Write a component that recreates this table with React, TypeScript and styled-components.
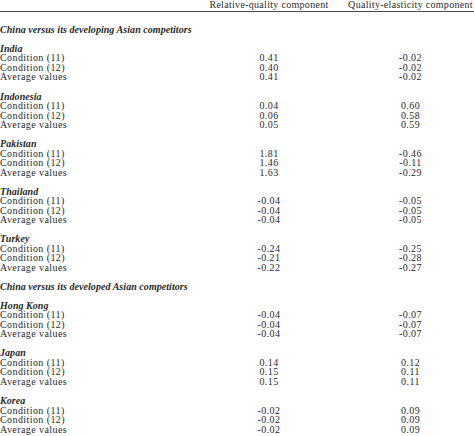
import React from 'react';
import styled, { createGlobalStyle } from 'styled-components';

type Country = {
  name: string;
  rows: [string, string, string][];
};

type Section = {
  title: string;
  countries: Country[];
};

const rowsFor = (values: [string, string][]): [string, string, string][] => [
  ['Condition (11)', values[0][0], values[0][1]],
  ['Condition (12)', values[1][0], values[1][1]],
  ['Average values', values[2][0], values[2][1]],
];

const sections: Section[] = [
  {
    title: 'China versus its developing Asian competitors',
    countries: [
      { name: 'India', rows: rowsFor([['0.41', '-0.02'], ['0.40', '-0.02'], ['0.41', '-0.02']]) },
      { name: 'Indonesia', rows: rowsFor([['0.04', '0.60'], ['0.06', '0.58'], ['0.05', '0.59']]) },
      { name: 'Pakistan', rows: rowsFor([['1.81', '-0.46'], ['1.46', '-0.11'], ['1.63', '-0.29']]) },
      { name: 'Thailand', rows: rowsFor([['-0.04', '-0.05'], ['-0.04', '-0.05'], ['-0.04', '-0.05']]) },
      { name: 'Turkey', rows: rowsFor([['-0.24', '-0.25'], ['-0.21', '-0.28'], ['-0.22', '-0.27']]) },
    ],
  },
  {
    title: 'China versus its developed Asian competitors',
    countries: [
      { name: 'Hong Kong', rows: rowsFor([['-0.04', '-0.07'], ['-0.04', '-0.07'], ['-0.04', '-0.07']]) },
      { name: 'Japan', rows: rowsFor([['0.14', '0.12'], ['0.15', '0.11'], ['0.15', '0.11']]) },
      { name: 'Korea', rows: rowsFor([['-0.02', '0.09'], ['-0.02', '0.09'], ['-0.02', '0.09']]) },
    ],
  },
];

const GlobalStyle = createGlobalStyle`
  html, body {
    margin: 0;
    padding: 0;
    background: #ffffff;
  }
  body {
    font-family: "Liberation Serif", "Times New Roman", serif;
    color: #2a2a2a;
  }
`;

const Table = styled.div`
  width: 474px;
  height: 436px;
  overflow: hidden;
  font-size: 10px;
  letter-spacing: 0.42px;
`;

const Row = styled.div<{ $header?: boolean }>`
  display: grid;
  grid-template-columns: 209px 120px 145px;
  height: ${(p) => (p.$header ? '11px' : '9.53px')};
  line-height: ${(p) => (p.$header ? '10px' : '9.53px')};
  white-space: nowrap;
  ${(p) => (p.$header ? 'border-bottom: 1.4px solid #4a4a4a;' : '')}
`;

const Body = styled.div`
  padding-top: 3.4px;
`;

const Label = styled.div`
  padding-left: 0;
`;

const Heading = styled.div`
  grid-column: 1 / -1;
  font-weight: bold;
  font-style: italic;
  letter-spacing: 0.05px;
`;

const Value = styled.div<{ $last?: boolean }>`
  text-align: center;
  padding-left: ${(p) => (p.$last ? '18px' : '0')};
`;

const HeaderCell = styled(Value)`
  letter-spacing: 0.3px;
`;

const Blank = styled.div`
  height: 9.53px;
`;

export default function App() {
  return (
    <>
      <GlobalStyle />
      <Table>
        <Row $header>
          <Label />
          <HeaderCell>Relative-quality component</HeaderCell>
          <HeaderCell $last>Quality-elasticity component</HeaderCell>
        </Row>
        <Body>
          {sections.map((section) => (
            <React.Fragment key={section.title}>
              <Blank />
              <Row>
                <Heading>{section.title}</Heading>
              </Row>
              {section.countries.map((country) => (
                <React.Fragment key={country.name}>
                  <Blank />
                  <Row>
                    <Heading>{country.name}</Heading>
                  </Row>
                  {country.rows.map(([label, a, b]) => (
                    <Row key={label}>
                      <Label>{label}</Label>
                      <Value>{a}</Value>
                      <Value $last>{b}</Value>
                    </Row>
                  ))}
                </React.Fragment>
              ))}
            </React.Fragment>
          ))}
        </Body>
      </Table>
    </>
  );
}
